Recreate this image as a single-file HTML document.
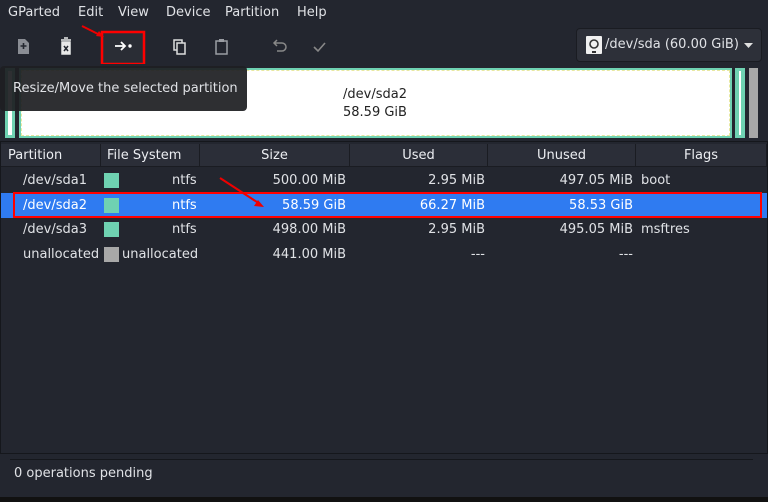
<!DOCTYPE html><html><head><style>
body{margin:0;width:768px;height:502px;background:#23262f;font-family:"DejaVu Sans","Liberation Sans",sans-serif;color:#e0e2e6;font-size:13px;position:relative;overflow:hidden}
.a{position:absolute;white-space:nowrap}
.menu span{position:absolute;top:5px}
.hd{position:absolute;top:144px;height:23px;background:#2b2e38;border-right:1px solid #1a1c22;border-bottom:1px solid #1a1c22;font-weight:normal;color:#eceef2;line-height:23px;box-sizing:border-box}
.sw{position:absolute;width:15px;height:15px;background:#6fd2b2}
</style></head><body>
<div class="menu"><span style="left:8px">GParted</span><span style="left:78px">Edit</span><span style="left:118px">View</span><span style="left:166px">Device</span><span style="left:225px">Partition</span><span style="left:297px">Help</span></div>
<svg class="a" style="left:0;top:30px" width="360" height="34">
<path d="M18 9h7l4 4v11H18z" fill="#8a8d94"/><path d="M23.5 13v6M20.5 16h6" stroke="#23262f" stroke-width="1.6"/>
<path d="M61 10h10M64 8h4M62 12h8v12h-8z" stroke="#e8e8e8" fill="#e8e8e8" stroke-width="1.5"/><path d="M64 16l4 5M68 16l-4 5" stroke="#23262f" stroke-width="1.5"/>
<rect x="102" y="2" width="42" height="32" fill="#2a2d35" stroke="#f00" stroke-width="2.5"/>
<path d="M115 16h10M121 12l4 4-4 4" stroke="#fff" stroke-width="1.8" fill="none"/><circle cx="130" cy="16" r="1.7" fill="#fff"/>
<rect x="174" y="10" width="8" height="10" fill="none" stroke="#ddd" stroke-width="1.5"/><rect x="177" y="13" width="8" height="11" fill="#23262f" stroke="#ddd" stroke-width="1.5"/>
<rect x="216" y="11" width="11" height="13" fill="none" stroke="#9a9da3" stroke-width="1.5"/><rect x="219" y="9" width="5" height="3" fill="#9a9da3"/>
<path d="M274 13h8a4 4 0 010 8h-5M277 10l-3 3 3 3" stroke="#888" stroke-width="1.5" fill="none"/>
<path d="M314 17l4 4 7-8" stroke="#888" stroke-width="1.6" fill="none"/>
</svg>
<svg class="a" style="left:80px;top:24px" width="30" height="16"><path d="M2 2l20 10" stroke="#e00" stroke-width="2"/><path d="M24 13l-8-1 3-5z" fill="#e00"/></svg>
<div class="a" style="left:576px;top:28px;width:186px;height:34px;background:#2d3039;border:1px solid #1a1c22;border-radius:4px;box-sizing:border-box"></div>
<svg class="a" style="left:585px;top:35px" width="20" height="20"><rect x="1" y="1" width="16" height="18" rx="1" fill="#f0f0f0"/><circle cx="9" cy="9" r="4" fill="none" stroke="#333" stroke-width="1.6"/><rect x="7" y="16" width="4" height="2" fill="#333"/></svg>
<div class="a" style="left:605px;top:37px">/dev/sda (60.00 GiB)</div>
<svg class="a" style="left:743px;top:42px" width="12" height="8"><path d="M1 1h9l-4.5 5z" fill="#e0e0e0"/></svg>
<div class="a" style="left:5px;top:68px;width:10px;height:70px;background:#6fd2b2"></div>
<div class="a" style="left:8px;top:71px;width:4px;height:64px;background:#fff"></div>
<div class="a" style="left:19px;top:68px;width:713px;height:70px;background:#6fd2b2"></div>
<div class="a" style="left:21px;top:70px;width:707px;height:64px;background:#fff;border:1px dashed #e8e8a0"></div>
<div class="a" style="left:343px;top:87px;color:#222">/dev/sda2</div>
<div class="a" style="left:343px;top:105px;color:#222">58.59 GiB</div>
<div class="a" style="left:735px;top:68px;width:10px;height:70px;background:#6fd2b2"></div>
<div class="a" style="left:739px;top:71px;width:2px;height:64px;background:#fff"></div>
<div class="a" style="left:749px;top:68px;width:9px;height:70px;background:#a8a8a8"></div>
<div class="a" style="left:0;top:66px;width:247px;height:45px;background:rgba(30,31,34,.93);border-radius:4px"></div>
<div class="a" style="left:13px;top:81px">Resize/Move the selected partition</div>
<div class="a" style="left:0;top:141px;width:768px;height:313px;border:1px solid #15171c;box-sizing:border-box"></div>
<div class="hd" style="left:1px;width:100px;padding-left:7px">Partition</div>
<div class="hd" style="left:101px;width:99px;padding-left:6px">File System</div>
<div class="hd" style="left:200px;width:150px;text-align:center">Size</div>
<div class="hd" style="left:350px;width:138px;text-align:center">Used</div>
<div class="hd" style="left:488px;width:148px;text-align:center">Unused</div>
<div class="hd" style="left:636px;width:131px;text-align:center">Flags</div>
<div class="a" style="left:1px;top:193px;width:766px;height:25px;background:#2f7bf1"></div>
<div class="a" style="left:13px;top:192px;width:749px;height:26px;border:2.5px solid #f00;box-sizing:border-box"></div>
<div class="a" style="left:23px;top:173px">/dev/sda1</div><div class="sw" style="left:104px;top:173px"></div><div class="a" style="left:172px;top:173px">ntfs</div><div class="a" style="right:422px;top:173px">500.00 MiB</div><div class="a" style="right:283px;top:173px">2.95 MiB</div><div class="a" style="right:135px;top:173px">497.05 MiB</div><div class="a" style="left:641px;top:173px">boot</div>
<div class="a" style="left:23px;top:198px;color:#fff">/dev/sda2</div><div class="sw" style="left:104px;top:198px"></div><div class="a" style="left:172px;top:198px;color:#fff">ntfs</div><div class="a" style="right:422px;top:198px;color:#fff">58.59 GiB</div><div class="a" style="right:283px;top:198px;color:#fff">66.27 MiB</div><div class="a" style="right:135px;top:198px;color:#fff">58.53 GiB</div>
<div class="a" style="left:23px;top:222px">/dev/sda3</div><div class="sw" style="left:104px;top:222px"></div><div class="a" style="left:172px;top:222px">ntfs</div><div class="a" style="right:422px;top:222px">498.00 MiB</div><div class="a" style="right:283px;top:222px">2.95 MiB</div><div class="a" style="right:135px;top:222px">495.05 MiB</div><div class="a" style="left:641px;top:222px">msftres</div>
<div class="a" style="left:23px;top:247px">unallocated</div><div class="sw" style="left:104px;top:247px;background:#a8a8a8"></div><div class="a" style="left:122px;top:247px">unallocated</div><div class="a" style="right:422px;top:247px">441.00 MiB</div><div class="a" style="right:283px;top:247px">---</div><div class="a" style="right:135px;top:247px">---</div>
<svg class="a" style="left:218px;top:176px" width="50" height="36"><path d="M2 2l40 26" stroke="#e00" stroke-width="2"/><path d="M46 31l-10-1 4-6z" fill="#e00"/></svg>
<div class="a" style="left:10px;top:459px;height:1px;background:#15171c;width:743px"></div>
<div class="a" style="left:14px;top:466px">0 operations pending</div>
<div class="a" style="left:0;top:497px;width:768px;height:5px;background:#111"></div>
</body></html>
